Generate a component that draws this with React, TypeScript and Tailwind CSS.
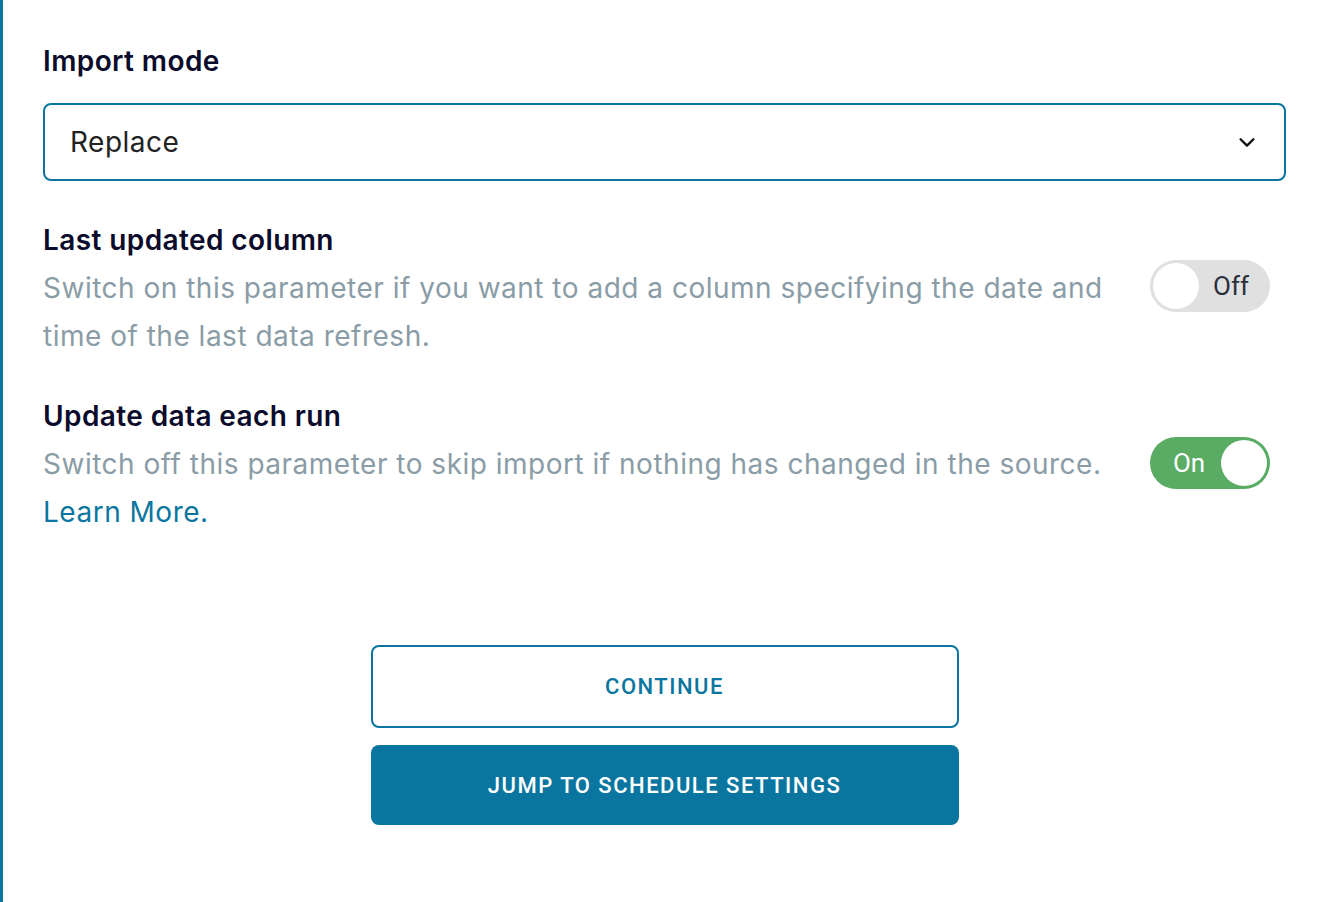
import React from "react";

const body = { fontFamily: "Inter, 'Noto Sans', sans-serif" };
const btn = { fontFamily: "Roboto, 'Liberation Sans', sans-serif" };

function Toggle({ on }: { on: boolean }) {
  return (
    <div
      className={`flex h-[52px] w-[120px] shrink-0 items-center rounded-full p-[3px] ${
        on ? "bg-[#5aab64] flex-row-reverse" : "bg-[#e0e0e0]"
      }`}
    >
      <div className="h-[46px] w-[46px] rounded-full bg-white" />
      <span
        style={btn}
        className={`flex-1 text-center text-[26px] ${on ? "pl-[4px] text-white" : "pr-[4px] text-[#2a2f3a]"}`}
      >
        {on ? "On" : "Off"}
      </span>
    </div>
  );
}

export default function App() {
  return (
    <div style={body} className="min-h-[902px] w-[1324px] bg-white border-l-[3px] border-[#0a76a0]">
      <div className="pl-[40px] pr-[38px] pt-[42px]">
        <h2 className="text-[28px] font-semibold leading-[38px] tracking-[0.4px] text-[#0b0b2b]">Import mode</h2>
        <div className="mt-[23px] flex h-[78px] items-center justify-between rounded-[8px] border-2 border-[#0a76a0] pl-[25px] pr-[26px]">
          <span className="text-[28px] tracking-[0.5px] text-[#222]">Replace</span>
          <svg width="22" height="22" viewBox="0 0 24 24" fill="none" stroke="#111" strokeWidth="2.6" strokeLinecap="round" strokeLinejoin="round">
            <path d="M5 9l7 7 7-7" />
          </svg>
        </div>

        <div className="mt-[35px] flex items-start">
          <div className="flex-1 pr-[20px]">
            <h3 className="text-[28px] font-semibold leading-[48px] tracking-[0.4px] text-[#0b0b2b]">Last updated column</h3>
            <p className="text-[28px] leading-[48px] tracking-[0.5px] text-[#8a9ca6]">
              Switch on this parameter if you want to add a column specifying the date and time of the last data refresh.
            </p>
          </div>
          <div className="mr-[16px] mt-[44px]">
            <Toggle on={false} />
          </div>
        </div>

        <div className="mt-[32px] flex items-start">
          <div className="flex-1 pr-[20px]">
            <h3 className="text-[28px] font-semibold leading-[48px] tracking-[0.4px] text-[#0b0b2b]">Update data each run</h3>
            <p className="text-[28px] leading-[48px] tracking-[0.5px] text-[#8a9ca6]">
              Switch off this parameter to skip import if nothing has changed in the source.
              <br />
              <a className="text-[#0a76a0]">Learn More.</a>
            </p>
          </div>
          <div className="mr-[16px] mt-[45px]">
            <Toggle on={true} />
          </div>
        </div>

        <div className="mt-[109px] flex flex-col items-center gap-[17px]">
          <button
            style={btn}
            className="h-[83px] w-[588px] rounded-[8px] border-2 border-[#0a76a0] bg-white text-[22px] font-medium tracking-[1.5px] text-[#0a76a0]"
          >
            CONTINUE
          </button>
          <button
            style={btn}
            className="h-[80px] w-[588px] rounded-[8px] bg-[#0a76a0] text-[22px] font-medium tracking-[1.5px] text-white"
          >
            JUMP TO SCHEDULE SETTINGS
          </button>
        </div>
      </div>
    </div>
  );
}
